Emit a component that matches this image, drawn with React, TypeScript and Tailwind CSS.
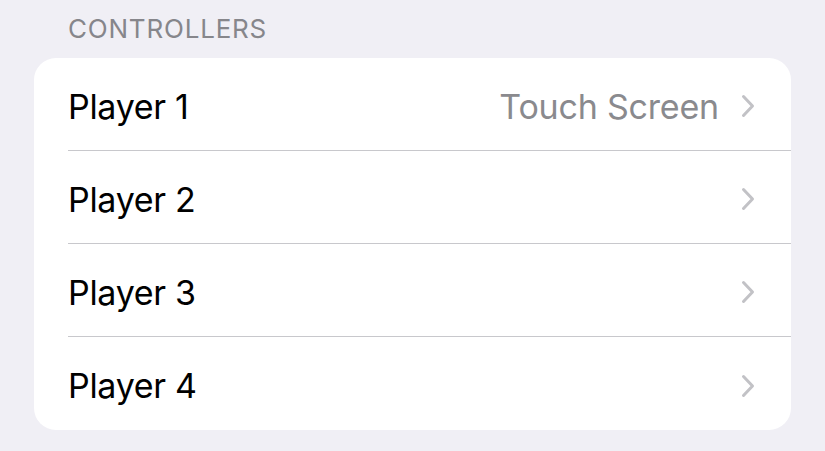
import React from "react";

function Chevron() {
  return (
    <svg width="16" height="26" viewBox="0 0 16 26" fill="none" className="shrink-0">
      <path d="M3.5 3.5 L12.5 13 L3.5 22.5" stroke="#c2c2c6" strokeWidth="3" strokeLinecap="round" strokeLinejoin="round" />
    </svg>
  );
}

const rows = [
  { label: "Player 1", value: "Touch Screen" },
  { label: "Player 2", value: "" },
  { label: "Player 3", value: "" },
  { label: "Player 4", value: "" },
];

export default function App() {
  return (
    <div
      className="w-[825px] h-[451px] bg-[#f0eff5] overflow-hidden"
      style={{ fontFamily: "Inter, 'Noto Sans', sans-serif" }}
    >
      <div className="pl-[68px] pt-[14px] h-[58px] text-[26px] leading-[30px] text-[#86868b] tracking-[0.8px]">
        CONTROLLERS
      </div>
      <div className="ml-[34px] w-[757px] bg-white rounded-[22px] overflow-hidden">
        {rows.map((r, i) => (
          <div key={r.label} className="pl-[34px]">
            <div
              className={
                "h-[93px] flex items-center pr-[35px] pt-[4px] " +
                (i < rows.length - 1 ? "border-b border-[#c8c8cc]" : "")
              }
            >
              <span className="flex-1 text-[34px] text-black tracking-[-0.3px]">{r.label}</span>
              {r.value && (
                <span className="text-[34px] text-[#8a8a8e] mr-[21px] tracking-[-0.2px]">{r.value}</span>
              )}
              <Chevron />
            </div>
          </div>
        ))}
      </div>
    </div>
  );
}
